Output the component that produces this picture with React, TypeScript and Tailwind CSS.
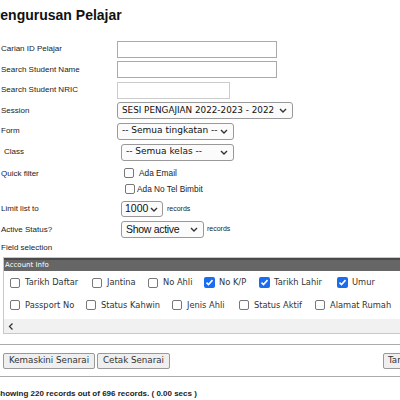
import React from "react";

const arial = "font-['Liberation_Sans',Arial,sans-serif]";
const verdana = "font-['DejaVu_Sans',Verdana,sans-serif]";

function Chevron() {
  return (
    <svg width="8" height="5" viewBox="0 0 8 5" className="shrink-0">
      <path d="M1 1l3 3 3-3" fill="none" stroke="#333" strokeWidth="1.4" />
    </svg>
  );
}

function Select({ text, className, textClass }: { text: string; className: string; textClass: string }) {
  return (
    <div
      className={`flex items-center justify-between rounded-[3px] border border-[#999] bg-[#fbfbfb] pl-[4px] pr-[5px] text-[#111] ${className}`}
    >
      <span className={`whitespace-nowrap ${textClass}`}>{text}</span>
      <Chevron />
    </div>
  );
}

function Box({ checked }: { checked?: boolean }) {
  if (checked) {
    return (
      <div className="flex h-[11px] w-[11px] shrink-0 items-center justify-center rounded-[2px] bg-[#1a6cf0]">
        <svg width="9" height="9" viewBox="0 0 9 9">
          <path d="M1.5 4.6l2 2 4-4.5" fill="none" stroke="white" strokeWidth="1.6" />
        </svg>
      </div>
    );
  }
  return <div className="h-[10px] w-[10px] shrink-0 rounded-[2px] border border-[#777] bg-white" />;
}

function Field({ label, checked, width }: { label: string; checked?: boolean; width: string }) {
  return (
    <div className={`flex shrink-0 items-center ${width}`}>
      <Box checked={checked} />
      <span className={`whitespace-nowrap ${checked ? "ml-[4px]" : "ml-[5px]"}`}>{label}</span>
    </div>
  );
}

function Row({ label, children, height, indent }: { label: string; children?: React.ReactNode; height: string; indent?: boolean }) {
  return (
    <div className={`flex items-center ${height}`}>
      <div className={`w-[117px] shrink-0 ${indent ? "pl-[4px]" : "pl-[1px]"}`}>{label}</div>
      {children}
    </div>
  );
}

export default function App() {
  return (
    <div className={`h-[400px] w-[400px] overflow-hidden bg-white text-[#222] ${arial}`}>
      <h1 className="-ml-[9px] pt-[6px] text-[14px] font-bold leading-[18px] text-[#111]">Pengurusan Pelajar</h1>

      <div className="mt-[15px] flex flex-col text-[8px]">
        <Row label="Carian ID Pelajar" height="h-[20px]">
          <div className="h-[17px] w-[160px] border border-[#aaa]" />
        </Row>
        <Row label="Search Student Name" height="h-[21px]">
          <div className="h-[17px] w-[160px] border border-[#aaa]" />
        </Row>
        <Row label="Search Student NRIC" height="h-[20px]">
          <div className="h-[17px] w-[113px] border border-[#ccc]" />
        </Row>
        <Row label="Session" height="h-[21px]">
          <Select text="SESI PENGAJIAN 2022-2023 - 2022" className="h-[17px] w-[176px]" textClass={`${verdana} text-[8.8px]`} />
        </Row>
        <Row label="Form" height="h-[20px]">
          <Select text="-- Semua tingkatan --" className="h-[17px] w-[117px]" textClass={`${verdana} text-[9px]`} />
        </Row>
        <Row label="Class" height="h-[22px]" indent>
          <div className="pl-[4px]">
            <Select text="-- Semua kelas --" className="h-[17px] w-[113px]" textClass={`${verdana} text-[9px]`} />
          </div>
        </Row>
        <div className="flex pt-[4px]">
          <div className="w-[117px] shrink-0 pl-[1px] pt-[1px]">Quick filter</div>
          <div className="flex flex-col gap-[4px] pl-[7px] text-[8.3px] leading-[12px]">
            <div className="flex items-center">
              <Box />
              <span className="ml-[5px]">Ada Email</span>
            </div>
            <div className="flex items-center pl-[1px]">
              <Box />
              <span className="ml-[2px]">Ada No Tel Bimbit</span>
            </div>
          </div>
        </div>
        <Row label="Limit list to" height="h-[22px] mt-[3px]">
          <div className="flex items-center pl-[4px]">
            <Select text="1000" className="h-[16px] w-[42px] !pl-[3px] !pr-[4px]" textClass="text-[10.5px]" />
            <span className="ml-[4px] text-[7px]">records</span>
          </div>
        </Row>
        <Row label="Active Status?" height="h-[19px]">
          <div className="flex items-center pl-[4px]">
            <Select text="Show active" className="h-[17px] w-[83px]" textClass="text-[10.5px] tracking-[-0.3px]" />
            <span className="ml-[3px] text-[7px]">records</span>
          </div>
        </Row>
        <Row label="Field selection" height="h-[18px]" />
      </div>

      <div className="ml-[3px] w-[420px] border border-[#c8c8c8]">
        <div className={`flex h-[13px] items-center border-t-2 border-[#4a4a4a] bg-[#666] pl-[1px] text-[7px] text-white ${verdana}`}>
          Account Info
        </div>
        <div className={`flex flex-col bg-white pb-[3px] text-[8.3px] text-[#333] ${verdana}`}>
          <div className="flex h-[23px] items-center pl-[6px]">
            <Field label="Tarikh Daftar" width="w-[82px]" />
            <Field label="Jantina" width="w-[56px]" />
            <Field label="No Ahli" width="w-[56px]" />
            <Field label="No K/P" checked width="w-[55px]" />
            <Field label="Tarikh Lahir" checked width="w-[78px]" />
            <Field label="Umur" checked width="w-[60px]" />
          </div>
          <div className="flex h-[22px] items-center pl-[6px]">
            <Field label="Passport No" width="w-[76px]" />
            <Field label="Status Kahwin" width="w-[86px]" />
            <Field label="Jenis Ahli" width="w-[67px]" />
            <Field label="Status Aktif" width="w-[76px]" />
            <Field label="Alamat Rumah" width="w-[80px]" />
          </div>
        </div>
        <div className="flex h-[14px] items-center bg-[#f1f1f1] pl-[4px]">
          <svg width="6" height="7" viewBox="0 0 6 7">
            <path d="M4.5 0.5L1.5 3.5l3 3" fill="none" stroke="#333" strokeWidth="1.3" />
          </svg>
        </div>
      </div>

      <div className="mt-[10px] flex h-[33px] items-center justify-between border-y border-[#aaa] pl-[3px]">
        <div className={`flex gap-[2px] text-[8.7px] text-[#333] ${verdana}`}>
          <button className="h-[16px] rounded-[2px] border border-[#999] bg-[#efefef] px-[5px]">Kemaskini Senarai</button>
          <button className="h-[16px] rounded-[2px] border border-[#999] bg-[#efefef] px-[5px]">Cetak Senarai</button>
        </div>
        <div className={`text-[8.7px] text-[#333] ${verdana}`}>
          <button className="-mr-[40px] h-[16px] w-[57px] rounded-[2px] border border-[#999] bg-[#efefef] pl-[4px] text-left">Tambah</button>
        </div>
      </div>

      <p className="-ml-[5px] mt-[11px] text-[8px] font-bold text-[#222]">Showing 220 records out of 696 records. ( 0.00 secs )</p>
    </div>
  );
}
